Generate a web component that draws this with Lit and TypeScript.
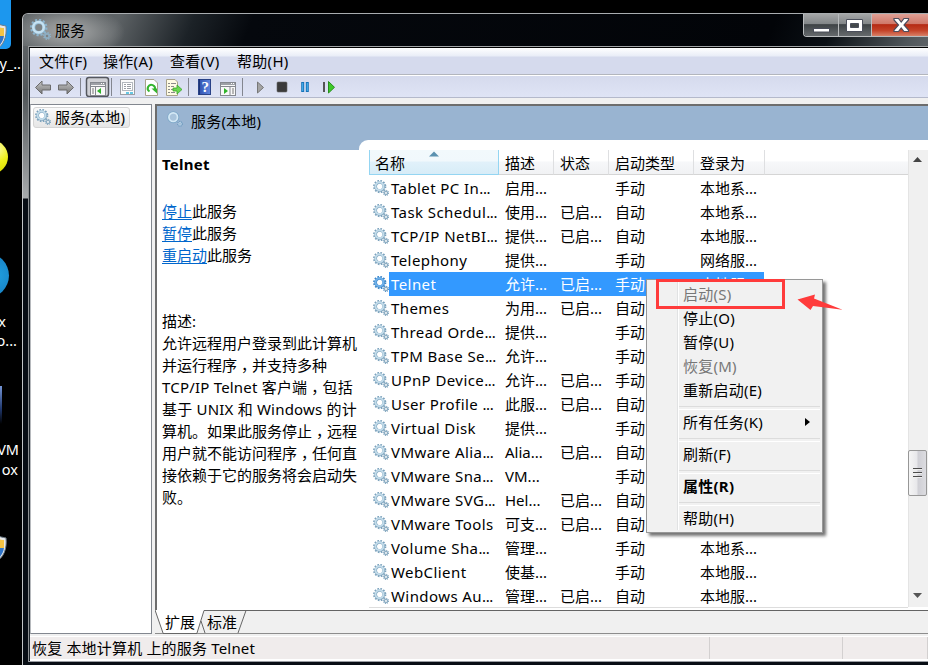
import { LitElement, html, css, svg } from "lit";
import { customElement } from "lit/decorators.js";

type Row = [string, string, boolean, string, string];
const ROWS: Row[] = [
  ["Tablet PC In...", "启用...", false, "手动", "本地系..."],
  ["Task Schedul...", "使用...", true, "自动", "本地系..."],
  ["TCP/IP NetBI...", "提供...", true, "自动", "本地服..."],
  ["Telephony", "提供...", false, "手动", "网络服..."],
  ["Telnet", "允许...", true, "手动", "本地服..."],
  ["Themes", "为用...", true, "自动", "本地系..."],
  ["Thread Orde...", "提供...", false, "手动", "本地服..."],
  ["TPM Base Se...", "允许...", false, "手动", "本地服..."],
  ["UPnP Device...", "允许...", true, "手动", "本地服..."],
  ["User Profile ...", "此服...", true, "自动", "本地系..."],
  ["Virtual Disk", "提供...", false, "手动", "本地系..."],
  ["VMware Alia...", "Alia...", true, "自动", "本地系..."],
  ["VMware Sna...", "VM...", false, "手动", "本地系..."],
  ["VMware SVG...", "Hel...", true, "自动", "本地系..."],
  ["VMware Tools", "可支...", true, "自动", "本地系..."],
  ["Volume Sha...", "管理...", false, "手动", "本地系..."],
  ["WebClient", "使基...", false, "手动", "本地服..."],
  ["Windows Au...", "管理...", true, "自动", "本地服..."],
];

const DESC = ["允许远程用户登录到此计算机", "并运行程序，并支持多种", "TCP/IP Telnet 客户端，包括", "基于 UNIX 和 Windows 的计", "算机。如果此服务停止，远程", "用户就不能访问程序，任何直", "接依赖于它的服务将会启动失", "败。"];

type Item = { label: string; kind?: "off" | "bold" | "sub" } | null;
const MENU: Item[] = [
  { label: "启动(S)", kind: "off" },
  { label: "停止(O)" },
  { label: "暂停(U)" },
  { label: "恢复(M)", kind: "off" },
  { label: "重新启动(E)" },
  null,
  { label: "所有任务(K)", kind: "sub" },
  null,
  { label: "刷新(F)" },
  null,
  { label: "属性(R)", kind: "bold" },
  null,
  { label: "帮助(H)" },
];

const gears = (size: number, rim = "#7da3bd", fill = "#c3dcea", hole = "#fff") => html`
  <svg class="gears" width=${size} height=${size} viewBox="0 0 16 16">
    <circle cx="6.7" cy="6.5" r="5.7" fill="none" stroke=${rim} stroke-width="1.9" stroke-dasharray="1.65 1.33"/>
    <circle cx="6.7" cy="6.5" r="4" fill=${hole} stroke=${rim} stroke-width="2.6"/>
    <circle cx="6.5" cy="6.3" r="4" fill="none" stroke=${fill} stroke-width="1.9"/>
    <circle cx="13" cy="12.9" r="2.5" fill="none" stroke=${rim} stroke-width="1.1" stroke-dasharray="1 .96"/>
    <circle cx="13" cy="12.9" r="1.6" fill=${hole} stroke="#8eaec3" stroke-width="1.3"/>
  </svg>`;

const paleGears = html`
  <svg class="gears" width="16" height="16" viewBox="0 0 16 16">
    <circle cx="6.300" cy="6.300" r="5.200" fill="none" stroke="#7fa9c9" stroke-width="1.600"/>
    <circle cx="6.200" cy="6.200" r="4.300" fill="#a9c4dc" stroke="#d3e8f5" stroke-width="1.700"/>
    <circle cx="13" cy="12.800" r="2.300" fill="none" stroke="#6f9cc0" stroke-width="1.300" stroke-dasharray="1 .8"/>
    <circle cx="13" cy="12.800" r="1.300" fill="none" stroke="#b4d0e4"/>
  </svg>`;

const shield = html`
  <svg width="26" height="32" viewBox="0 0 26 32">
    <path d="M13 1C17 5 21 5 25 6C26 17 23 26 13 31C3 26 0 17 1 6C5 5 9 5 13 1Z" fill="#e8e8e8" stroke="#6d7c8a"/>
    <path d="M13 4C16 7 20 8 23 8L23 16H3L3 8C7 8 10 7 13 4Z" fill="#f4c344"/>
    <path d="M3 16H23C22 22 19 26 13 29C7 26 4 22 3 16Z" fill="#2f74c8"/>
  </svg>`;

const panes = (flip: boolean, w: number) => svg`
  <rect x=".5" y=".5" width=${w - 1} height="13" fill="#f8f8f8" stroke="#85888f"/>
  <path d="M1 2H${w - 1}" stroke="#9da0a6" stroke-width="2"/>
  <path d="M${w - 5} 1.5h1M${w - 3} 1.5h1" stroke="#fff"/>
  <path d="M1 4.5H${w - 1}M${flip ? w - 6 : 5.5} 5V13" stroke="#85888f"/>
  ${flip
    ? svg`<path d="M4 6v6l4-3z" fill="#2fb32a"/><path d="M${w - 4} 7h2M${w - 4} 9h2M${w - 4} 11h2" stroke="#777"/>`
    : svg`<path d="M11 6v6l-4-3z" fill="#2fb32a"/><path d="M2 7h2M2 9h2M2 11h2" stroke="#777"/>`}`;

/* Trailing dots are set tighter than the name before them. */
const clipped = (name: string) => name.endsWith("...") ? html`${name.slice(0, -3)}<em>...</em>` : name;

/* Full-width commas sit in the middle of their em box. */
const prose = (line: string) => line.split("，").map((part, i) => html`${i ? html`<i>，</i>` : ""}${part}`);

@customElement("app-root")
export class AppRoot extends LitElement {
  static styles = css`
    :host { display: block; width: 928px; height: 665px; overflow: hidden; position: relative; background: #000;
      font: 15px/22px "Noto Sans", "Noto Sans CJK SC", sans-serif; color: #000; }
    * { box-sizing: border-box; }
    svg { display: block; flex: none; }
    .screen { display: grid; grid-template-columns: 22px 906px; height: 665px; }
    .desk { position: relative; overflow: hidden; color: #fff; font-size: 14.5px; line-height: 20px; }
    .desk > * { position: absolute; }
    .app { left: -20px; top: -6px; width: 31px; height: 55px; background: #1c97ee; border-radius: 5px; }
    .sh1 { left: -19px; top: 20px; } .sh2 { left: -19px; top: 532px; }
    .ca { top: 53px; right: 1px; } .cb { top: 311px; right: 16px; } .cc { top: 439px; right: 3px; }
    .cb2 { top: 330px; right: 5px; } .cc2 { top: 459px; right: 4px; }
    .ball { left: -26px; top: 140px; width: 34px; height: 34px; border-radius: 50%; background: radial-gradient(circle at 65% 25%, #fdfdb0, #eef01c 40%, #d8dc00 75%, #a6a800); }
    .globe { left: -36px; top: 253px; width: 45px; height: 45px; border-radius: 50%; background: radial-gradient(circle at 70% 50%, #20a0e0, #1579bd 70%, #3fa9df); }
    .glass { left: 0; top: 386px; width: 2px; height: 38px; background: linear-gradient(#7595d6, #20386e 60%, #000); }

    .win { margin-top: 13px; height: 652px; border-left: 1px solid #c4c6c8; border-top: 1px solid #a9adb0; border-radius: 6px 0 0 0;
      background: linear-gradient(#666a6d 0, #515659 80px, #a8abad 184px, #080d14 185px); padding-left: 5px; display: flex; flex-direction: column; overflow: hidden; }
    .title { margin-left: -5px; padding-left: 7px; height: 32px; flex: none; display: flex; position: relative;
      background: radial-gradient(ellipse 58px 26px at 44px 18px, #a5a7a8 0, #8e9192 40%, rgba(112,116,118,0) 100%),
        linear-gradient(112deg, #606568 0, #5d6265 90px, #1c2227 160px, #05080d 215px, #020408 700px, #0b1015 755px, #4f565a 830px, #5d6266 100%); }
    .title .gears { margin-top: 5px; }
    .title b { font-weight: 400; margin: 5px 0 0 4px; }
    .btns { position: absolute; left: 780px; top: -1px; width: 126px; height: 24px; display: flex; border: 1px solid #b9bcbe; border-right: 0; border-radius: 0 0 0 4px; overflow: hidden; }
    .btn { display: grid; place-items: center; background: linear-gradient(#a5a7a8 0, #818587 46%, #3e4346 48%, #666a6d 100%); border-right: 1px solid #b9bcbe; }
    .min { width: 35px; } .max { width: 33px; }
    .close { flex: 1; border: 0; background: linear-gradient(#dfa095 0, #cf7768 46%, #b52a14 48%, #c44329 75%, #d88067 100%); }
    .body { flex: none; border-left: 1px solid #8f9294; border-top: 1px solid #a2a5a7; border-bottom: 1px solid #9a9da3; height: 616px; }
    .client { border-left: 1px solid #20272d; border-top: 1px solid #000; height: 613px; background: #f0f0f0; display: flex; flex-direction: column; }
    .menubar { height: 27px; flex: none; background: linear-gradient(#fff 0, #e9edf7 8px, #d5daed 9px, #d5daed 100%); border-bottom: 1px solid #b3b6bd; display: flex; gap: 15px; padding: 2px 0 0 9px; letter-spacing: .3px; }
    .menubar span { width: 52px; flex: none; } .menubar span:nth-child(1) { width: 49px; }
    .toolbar { height: 23px; flex: none; border-top: 1px solid #fff; border-bottom: 1px solid #b4b9cb; background: linear-gradient(#d5daed, #dfe4f5); }
    .main { margin-top: 6px; height: 530px; flex: none; display: grid; grid-template-columns: 122px 3px 773px; }
    .tree { background: #fff; border: 1px solid #82878f; border-left-color: #b6b9bd; padding: 2px 0 0 2px; }
    .node { width: 97px; height: 21px; border: 1px solid #d5d5d5; border-radius: 3px; background: linear-gradient(#fafafa, #e6e6e6); display: flex; padding-left: 1px; gap: 4px; line-height: 18px; letter-spacing: .2px; white-space: nowrap; }
    .node .gears { margin-top: 1px; }
    .right { grid-column: 3; display: flex; flex-direction: column; height: 530px; }
    .pane { height: 507px; flex: none; border-left: 2px solid #6d6d6d; border-top: 2px solid #6d6d6d; border-bottom: 1px solid #646464; background: #fff; display: flex; flex-direction: column; }
    .head { height: 44px; flex: none; background: #99b4d1; display: flex; position: relative; padding: 5px 0 0 10px; gap: 8px; }
    .head span { margin-top: -1px; letter-spacing: .2px; }
    .lip { position: absolute; left: 202px; right: 0; bottom: 0; height: 10px; background: #fff; border-top-left-radius: 9px; }
    .cols { display: grid; grid-template-columns: 212px 539px 20px; height: 460px; }
    .info { padding: 3px 0 0 5px; white-space: nowrap; }
    .info h1 { margin: 0; font-size: 15px; line-height: 22px; font-weight: 700; letter-spacing: .25px; }
    .links { margin: 25px 0 44px; }
    .links u { color: #0066cc; text-decoration: none; box-shadow: 0 1px #0066cc; display: inline-block; height: 19px; line-height: 22px; vertical-align: top; }
    .links div { height: 22px; }
    .info p { margin: 0; height: 22px; }
    .info .mixed { letter-spacing: .2px; }
    .info i { font-style: normal; display: inline-block; transform: translateX(4px); }
    .list { height: 458px; overflow: hidden; border-bottom: 1px solid #ddd; }
    .grid { display: grid; grid-template-columns: 130px 55px 55px 85px 71px 1fr; }
    .hdr { height: 26px; line-height: 26px; }
    .hdr div { height: 25px; border-bottom: 1px solid #d5d5d5; border-right: 1px solid #dedfe1; padding-left: 6px; background: linear-gradient(#fff, #fff 45%, #f7f8fa 50%, #f1f2f4); }
    .hdr div:last-child { border-right: 0; }
    .hdr .sorted { border: 1px solid #94d5f2; border-top: 0; padding-left: 5px; background: linear-gradient(#f2f9fc 0, #f1f8fc 46%, #e1f1fa 50%, #d7ecf7); position: relative; }
    .sorted svg { position: absolute; left: 59px; top: 1px; }
    .row { height: 24px; line-height: 24px; grid-template-columns: 130px 55px 55px 85px 70px 1fr; }
    .row > div { padding-left: 6px; white-space: pre; overflow: hidden; }
    .row > .name { display: flex; padding-left: 4px; letter-spacing: .42px; }
    .name em { font-style: normal; letter-spacing: -.4px; }
    .name .gears { margin-top: 4px; }
    .name span { flex: 1; padding-left: 2px; }
    .on > div { background: #3399ff; color: #fff; }
    .on > .name, .on > .rest { background: none; }
    .on > .name span { background: #3399ff; }
    .bar { background: #f0f0f0; border-left: 1px solid #e4e4e4; position: relative; height: 457px; display: flex; flex-direction: column; align-items: center; justify-content: space-between; padding: 7px 2px 8px 0; }
    .thumb { position: absolute; left: -1px; top: 300px; width: 19px; height: 46px; border: 1px solid #979797; border-radius: 2px; background: linear-gradient(90deg, #f5f5f5, #e7e7ea 48%, #cfcfd5 52%, #dcdce0); display: flex; flex-direction: column; gap: 2px; align-items: center; padding-top: 17px; }
    .thumb i { width: 9px; height: 2px; border-top: 1px solid #4c4c4c; border-bottom: 1px solid #eee; }
    .tabs { height: 23px; border-bottom: 1px solid #8d8d8d; position: relative; background: #f0f0f0; display: flex; padding-left: 10px; gap: 12px; line-height: 23px; }
    .tabs svg { position: absolute; left: 0; top: -1px; } .tabs span { position: relative; }
    .status { margin-top: 2px; height: 25px; background: #f0ecec; border-top: 1px solid #fff; border-bottom: 2px solid #fff; display: grid; grid-template-columns: 680px 133px 85px; line-height: 22px; letter-spacing: .18px; }
    .status div { border-right: 1px solid #d3d0d0; padding-left: 2px; height: 22px; }

    .ctx { position: absolute; left: 646px; top: 279px; width: 177px; height: 254px; border: 1px solid #979797; background: linear-gradient(90deg, transparent 30px, #e1e2e3 30px, #e1e2e3 31px, #fff 31px, #fff 32px, transparent 32px) 0 2px / 100% 248px no-repeat #f1f1f1; padding: 3px 2px 0 32px; box-shadow: 3px 3px 3px rgba(0,0,0,.55); }
    .it { height: 24px; line-height: 22px; padding-left: 4px; display: flex; justify-content: space-between; letter-spacing: .25px; }
    .off { color: #777; } .bold { font-weight: 700; }
    .sub svg { margin: 7px 10px 0 0; }
    .sep { height: 8px; padding-top: 3px; } .sep::before { content: ""; display: block; height: 2px; border-top: 1px solid #dcdcdc; border-bottom: 1px solid #fff; }
    .mark { position: absolute; left: 656px; top: 279px; width: 129px; height: 30px; border: 3px solid #ff3b3b; }
    .arrow { position: absolute; left: 796px; top: 292px; }
  `;

  render() {
    return html`
      <div class="screen">
        <div class="desk">
          <div class="app"></div><div class="sh1">${shield}</div><div class="ca">y_..</div>
          <div class="ball"></div><div class="globe"></div>
          <div class="cb">x</div><div class="cb2">o...</div>
          <div class="glass"></div><div class="cc">VM</div><div class="cc2">ox</div>
          <div class="sh2">${shield}</div>
        </div>
        <div class="win">
          <div class="title">
            ${gears(21, "#8db4cd", "#c6e2f2", "#7d8386")}<b>服务</b>
            <div class="btns">
              <div class="btn min"><svg width="34" height="22"><rect x="9.500" y="14.500" width="16" height="3.500" fill="#fff" stroke="#4a4e5b"/></svg></div>
              <div class="btn max"><svg width="32" height="22"><path d="M7.500 5.500H23.500V17.500H7.500ZM11.500 9.500V13.500H19.500V9.500Z" fill="#fff" fill-rule="evenodd" stroke="#4a4e5b"/></svg></div>
              <div class="btn close"><svg width="20" height="16" viewBox="0 0 20 16"><path d="M3 1.500H7.500L10.200 5L13 1.500H17.500V3L13 8L17.500 13V14.500H13L10.200 11L7.500 14.500H3V13L7.500 8L3 3Z" fill="#fff" stroke="#4d4d5d" stroke-width="1.200"/></svg></div>
            </div>
          </div>
          <div class="body"><div class="client">
            <div class="menubar"><span>文件(F)</span><span>操作(A)</span><span>查看(V)</span><span>帮助(H)</span></div>
            <div class="toolbar">${this.tools()}</div>
            <div class="main">
              <div class="tree"><div class="node">${gears(16)}<span>服务(本地)</span></div></div>
              <div class="right">
                <div class="pane">
                  <div class="head">${paleGears}<span>服务(本地)</span><div class="lip"></div></div>
                  <div class="cols">
                    <div class="info">
                      <h1>Telnet</h1>
                      <div class="links"><div><u>停止</u>此服务</div><div><u>暂停</u>此服务</div><div><u>重启动</u>此服务</div></div>
                      <p>描述:</p>
                      ${DESC.map((l) => html`<p class=${/[A-Z]/.test(l) ? "mixed" : ""}>${prose(l)}</p>`)}
                    </div>
                    <div class="list">
                      <div class="grid hdr">
                        <div class="sorted">名称<svg width="10" height="6"><path d="M0 5.500L5 .5L10 5.500Z" fill="#5b91b0"/></svg></div>
                        <div>描述</div><div>状态</div><div>启动类型</div><div>登录为</div><div></div>
                      </div>
                      ${ROWS.map(([n, d, run, start, acct]) => {
                        const on = n === "Telnet";
                        return html`<div class="grid row ${on ? "on" : ""}"><div class="name">${on ? gears(16, "#3c86c8", "#6fb1ea") : gears(16)}<span>${clipped(n)}</span></div><div>${d}</div><div>${run ? "已启..." : ""}</div><div>${start}</div><div>${acct}</div><div class="rest"></div></div>`;
                      })}
                    </div>
                    <div class="bar">
                      <svg width="9" height="6"><path d="M0 5L4.500 0L9 5Z" fill="#444"/></svg>
                      <div class="thumb"><i></i><i></i><i></i></div>
                      <svg width="9" height="6"><path d="M0 0L4.500 5L9 0Z" fill="#555"/></svg>
                    </div>
                  </div>
                </div>
                <div class="tabs">
                  <svg width="96" height="24"><path d="M0 0L8 23H42L49 1V0Z" fill="#fff"/><path d="M0 0L8 23M42 23L49 .5H91L83 23M46 11L50 23" fill="none" stroke="#666"/><path d="M8 23.500H42" stroke="#666"/></svg>
                  <span>扩展</span><span>标准</span>
                </div>
              </div>
            </div>
            <div class="status"><div>恢复 本地计算机 上的服务 Telnet</div><div></div><div></div></div>
          </div></div>
        </div>
      </div>
      <div class="ctx">
        ${MENU.map((m) => m
          ? html`<div class="it ${m.kind ?? ""}">${m.label}${m.kind === "sub" ? html`<svg width="5" height="8"><path d="M0 0L5 4L0 8Z"/></svg>` : ""}</div>`
          : html`<div class="sep"></div>`)}
      </div>
      <div class="mark"></div>
      <svg class="arrow" width="48" height="20"><path d="M1.500 7.500L19 2.500L18 6.500L46.500 17.700L17 14L14.500 18Z" fill="#ff3b3b"/></svg>
    `;
  }

  /* Toolbar glyphs share one strip so that their baselines stay aligned. */
  private tools() {
    return html`<svg width="340" height="21" viewBox="30 76 340 21">
      <defs><linearGradient id="g" x2="0" y2="1"><stop stop-color="#c6c6c6"/><stop offset="1" stop-color="#777"/></linearGradient>
      <linearGradient id="h"><stop stop-color="#2c4fae"/><stop offset="1" stop-color="#5f86e0"/></linearGradient></defs>
      <path d="M35.500 87.500L42 81V85H50.500V90H42V94Z" fill="url(#g)" stroke="#6b6b6b"/>
      <path d="M73.500 87.500L67 81V85H58.500V90H67V94Z" fill="url(#g)" stroke="#6b6b6b"/>
      <path d="M80.500 78V96M111.500 78V96M188.500 78V96M242.500 78V96" stroke="#83868f"/>
      <rect x="86.500" y="77.500" width="22" height="19" rx="2.500" fill="#d0d1d6" stroke="#55585f" stroke-width="1.500"/>
      <g transform="translate(90 82)">${panes(false, 16)}</g>
      <rect x="120.500" y="79.500" width="14" height="15" fill="#fafafa" stroke="#9b9ea4"/><rect x="122.500" y="82.500" width="10" height="8" fill="#fff" stroke="#b4b8be"/>
      <path d="M124 84.500h2M124 86.500h2M124 88.500h2M127 84.500h4M127 86.500h4M127 88.500h4" stroke="#9a9ea5"/><path d="M126 93h3M130 93h3" stroke="#36b6dc" stroke-width="1.500"/>
      <path d="M145.500 79.500H154L157.500 83V95.500H145.500Z" fill="#fff" stroke="#a8a28b"/><path d="M149.500 91.500A3.600 3.600 0 1 1 154.800 89.500" fill="none" stroke="#35b52f" stroke-width="2"/><path d="M151.500 88.500H157V93.500Z" fill="#35b52f"/>
      <path d="M166.500 79.500H175L177.500 82V95.500H166.500Z" fill="#fffbe4" stroke="#a8a28b"/><path d="M168 83.500h2M168 86.500h2M168 89.500h2M168 92.500h2M171 83.500h5M171 86.500h3M171 89.500h2M171 92.500h4" stroke="#8b8b8b"/><path d="M173 88H177V85L182 89.500L177 94V91H173Z" fill="#6bd850" stroke="#3ba72c" stroke-width=".8"/>
      <rect x="198.500" y="79.500" width="12" height="15" fill="url(#h)" stroke="#294287"/><path d="M199.500 79V95" stroke="#1e3478"/><text x="201.500" y="92" font-family="Liberation Serif" font-weight="700" font-size="15" fill="#fff">?</text>
      <g transform="translate(220 82)">${panes(true, 16)}</g>
      <path d="M257.500 82V93L263.500 87.500Z" fill="#a4a4a4" stroke="#777"/>
      <rect x="277" y="82" width="10" height="10" rx="1" fill="#3b3b3b" stroke="#666" stroke-width=".6"/>
      <path d="M302.700 82V92M307.300 82V92" stroke="#1673b9" stroke-width="3"/><path d="M302.700 83V91M307.300 83V91" stroke="#4bb3f0"/>
      <path d="M324 82V92" stroke="#555" stroke-width="2"/><path d="M328.500 81.500V93L334.500 87.300Z" fill="#3dc929" stroke="#25901b"/>
    </svg>`;
  }
}
